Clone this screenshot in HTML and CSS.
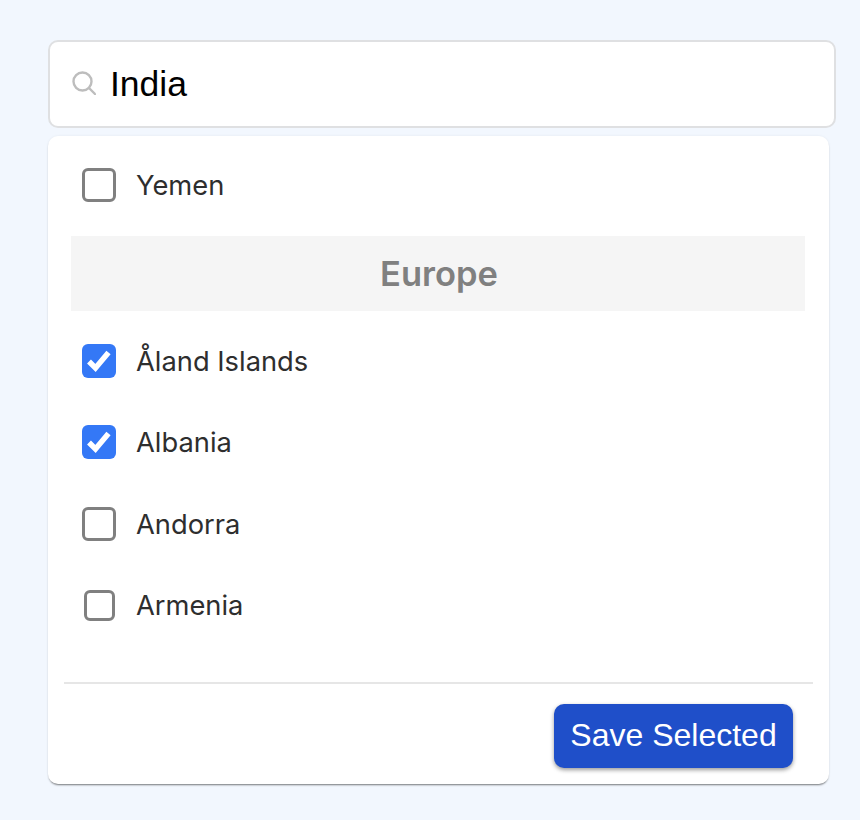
FILE: index.html
```html
<!DOCTYPE html>
<html lang="en">
<head>
<meta charset="utf-8">
<title>Country select</title>
<link rel="stylesheet" href="styles.css">
</head>
<body>
<div class="widget">
  <div class="search">
    <svg class="search-icon" viewBox="0 0 24 24" width="24" height="24" aria-hidden="true"><circle cx="10.5" cy="10.5" r="9"/><path d="M17 17l6 6"/></svg>
    <input class="search-input" type="text" value="India">
  </div>
  <div class="panel">
    <div class="list">
      <label class="row"><span class="box"></span><span class="name">Yemen</span></label>
      <div class="group">Europe</div>
      <label class="row"><span class="box checked"><svg viewBox="0 0 34 34" width="34" height="34" aria-hidden="true"><path d="M7 17.500l6.500 6.500L26.500 8.500"/></svg></span><span class="name">Åland Islands</span></label>
      <label class="row"><span class="box checked"><svg viewBox="0 0 34 34" width="34" height="34" aria-hidden="true"><path d="M7 17.500l6.500 6.500L26.500 8.500"/></svg></span><span class="name">Albania</span></label>
      <label class="row"><span class="box"></span><span class="name">Andorra</span></label>
      <label class="row"><span class="box small"></span><span class="name">Armenia</span></label>
    </div>
    <div class="footer">
      <button class="save" type="button">Save Selected</button>
    </div>
  </div>
</div>
</body>
</html>
```

FILE: styles.css
```css
* { box-sizing: border-box; }
html, body { margin: 0; height: 100%; }
body { background: #f2f7fe; padding: 40px 24px 0 48px; font-family: "Inter", "Liberation Sans", sans-serif; }
.widget { width: 788px; }
.search { height: 88px; background: #fff; border: 2px solid #dfe0e2; border-radius: 10px; display: flex; align-items: center; padding-left: 22px; gap: 14px; }
.search-icon { flex: none; fill: none; stroke: #bdbdbd; stroke-width: 2.4; stroke-linecap: round; margin-top: -2px; }
.search-input { flex: 1; min-width: 0; border: 0; outline: 0; background: transparent; padding: 0; font: 35.500px "Liberation Sans", Arial, sans-serif; color: #000; }
.panel { width: 781px; height: 648px; margin-top: 8px; background: #fff; border-radius: 10px; box-shadow: 0 2px 2px -1px rgba(0,0,0,.5), 0 0 3px rgba(0,0,0,.06); padding: 8px 16px 0; display: flex; flex-direction: column; }
.list { flex: 1; padding: 0 8px 0 7px; }
.row { display: flex; align-items: center; height: 81.4px; padding-left: 11px; gap: 21px; }
.box { flex: none; width: 34px; height: 34px; border: 3px solid #808080; border-radius: 6px; background: #fff; }
.box.small { width: 31px; height: 31px; margin: 0 1.500px; }
.box.checked { border: 0; background: #3478f6; }
.box svg { display: block; fill: none; stroke: #fff; stroke-width: 5.500; }
.name { font-size: 27.300px; color: #2e2e2e; margin-left: -1px; padding-top: 1px; }
.group { height: 75px; margin: 11px 0 9px; padding-left: 2px; background: #f5f5f5; color: #808080; display: flex; align-items: center; justify-content: center; font-size: 34.500px; font-weight: 600; }
.footer { flex: none; height: 102px; border-top: 2px solid #e6e6e6; display: flex; justify-content: flex-end; align-items: flex-start; padding: 20px 20px 0 0; }
.save { width: 239px; height: 64px; border: 0; border-radius: 10px; background: #1f4fc9; color: #fff; font: 32px "Liberation Sans", Arial, sans-serif; box-shadow: 0 2px 4px rgba(0,0,0,.4); padding: 0 0 2px; }
```
